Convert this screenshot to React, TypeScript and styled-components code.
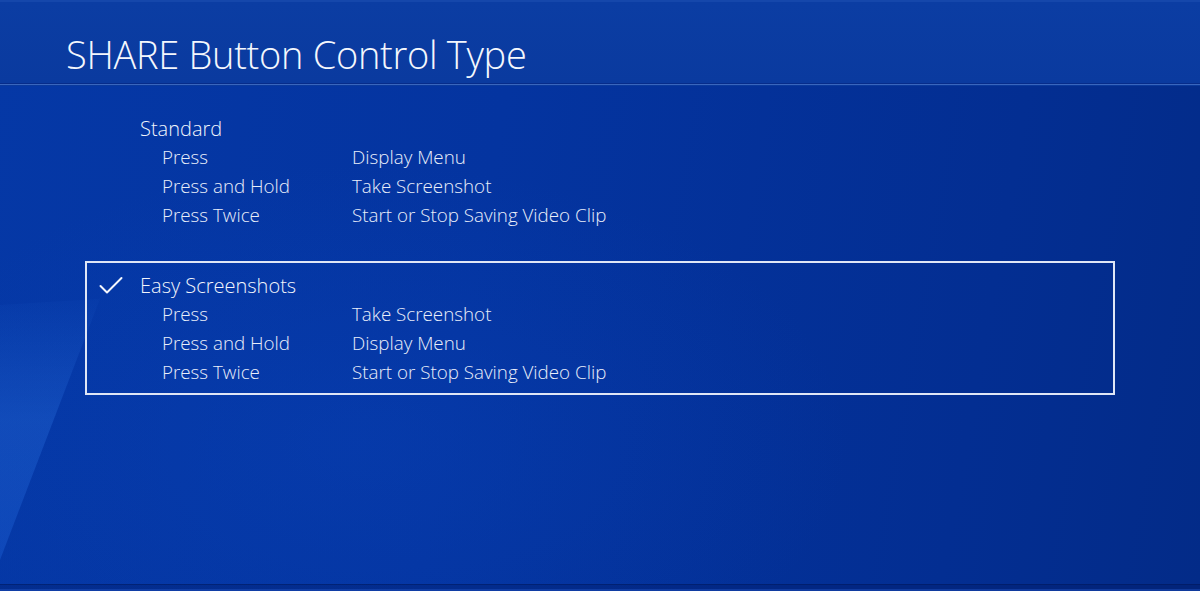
import React from "react";
import styled, { createGlobalStyle } from "styled-components";

const Global = createGlobalStyle`
  html, body {
    margin: 0;
    padding: 0;
    height: 100%;
    background: #0434a0;
  }
  #root {
    height: 100%;
  }
`;

const Screen = styled.div`
  position: relative;
  width: 1200px;
  height: 591px;
  overflow: hidden;
  font-family: "Open Sans", "Liberation Sans", sans-serif;
  font-weight: 300;
  color: #f2f5fc;
  background:
    radial-gradient(ellipse 700px 400px at 30% 75%, rgba(10, 70, 190, 0.3), transparent 70%),
    linear-gradient(100deg, #0538a6 0%, #0434a0 40%, #032e92 80%, #032b88 100%);

  /* light sweep on the lower left edge */
  &::before {
    content: "";
    position: absolute;
    left: 0;
    top: 280px;
    width: 100px;
    height: 311px;
    background: linear-gradient(180deg, rgba(40, 110, 220, 0) 0%, rgba(40, 110, 220, 0.35) 45%, rgba(30, 100, 220, 0.35) 100%);
    clip-path: polygon(0 8%, 100% 6%, 0 90%);
  }

  &::after {
    content: "";
    position: absolute;
    left: 0;
    right: 0;
    bottom: 0;
    height: 6px;
    background: rgba(0, 20, 90, 0.3);
    border-top: 1px solid rgba(0, 20, 80, 0.4);
    box-shadow: inset 0 -2px 0 rgba(30, 80, 190, 0.5);
  }
`;

const Header = styled.header`
  height: 84px;
  padding-left: 66px;
  padding-bottom: 10px;
  display: flex;
  align-items: flex-end;
  box-sizing: border-box;
  background: linear-gradient(180deg, #0b3da3 0%, #0a3a9f 100%);
  border-top: 2px solid #1547ab;
  border-bottom: 1px solid #062c8a;
  box-shadow: 0 1px 0 #3a66bd, 0 2px 0 #0a3a9c;
`;

const Title = styled.h1`
  margin: 0;
  font-size: 38px;
  font-weight: 300;
  letter-spacing: -0.3px;
  line-height: 1;
  color: #f4f7fd;
`;

const Content = styled.main`
  position: relative;
  z-index: 1;
  padding: 20px 85px 0 85px;
  display: flex;
  flex-direction: column;
  gap: 23px;
`;

const Option = styled.section<{ $selected?: boolean }>`
  width: 1030px;
  box-sizing: border-box;
  padding: 8px 0 6px 0;
  border: 2px solid ${p => (p.$selected ? "#dfe6f6" : "transparent")};
  display: flex;
  flex-direction: column;
`;

const OptionHead = styled.div`
  display: flex;
  align-items: center;
  height: 29px;
`;

const CheckSlot = styled.span`
  width: 53px;
  box-sizing: border-box;
  padding-left: 12px;
  display: flex;
`;

const OptionName = styled.span`
  font-size: 20px;
  line-height: 29px;
`;

const Row = styled.div`
  display: grid;
  grid-template-columns: 190px 1fr;
  padding-left: 75px;
  height: 29px;
  align-items: center;
  font-size: 18.8px;
  line-height: 29px;
  color: #e9eefa;
`;

const Check = () => (
  <svg width="24" height="20" viewBox="0 0 24 20" fill="none">
    <path d="M1.5 10 L8 16.5 L22.5 2" stroke="#f4f7fd" strokeWidth="2" strokeLinecap="round" strokeLinejoin="round" />
  </svg>
);

const options = [
  {
    name: "Standard",
    selected: false,
    rows: [
      ["Press", "Display Menu"],
      ["Press and Hold", "Take Screenshot"],
      ["Press Twice", "Start or Stop Saving Video Clip"],
    ],
  },
  {
    name: "Easy Screenshots",
    selected: true,
    rows: [
      ["Press", "Take Screenshot"],
      ["Press and Hold", "Display Menu"],
      ["Press Twice", "Start or Stop Saving Video Clip"],
    ],
  },
];

export default function App() {
  return (
    <>
      <Global />
      <Screen>
        <Header>
          <Title>SHARE Button Control Type</Title>
        </Header>
        <Content>
          {options.map(o => (
            <Option key={o.name} $selected={o.selected}>
              <OptionHead>
                <CheckSlot>{o.selected && <Check />}</CheckSlot>
                <OptionName>{o.name}</OptionName>
              </OptionHead>
              {o.rows.map(([a, b]) => (
                <Row key={a}>
                  <span>{a}</span>
                  <span>{b}</span>
                </Row>
              ))}
            </Option>
          ))}
        </Content>
      </Screen>
    </>
  );
}
